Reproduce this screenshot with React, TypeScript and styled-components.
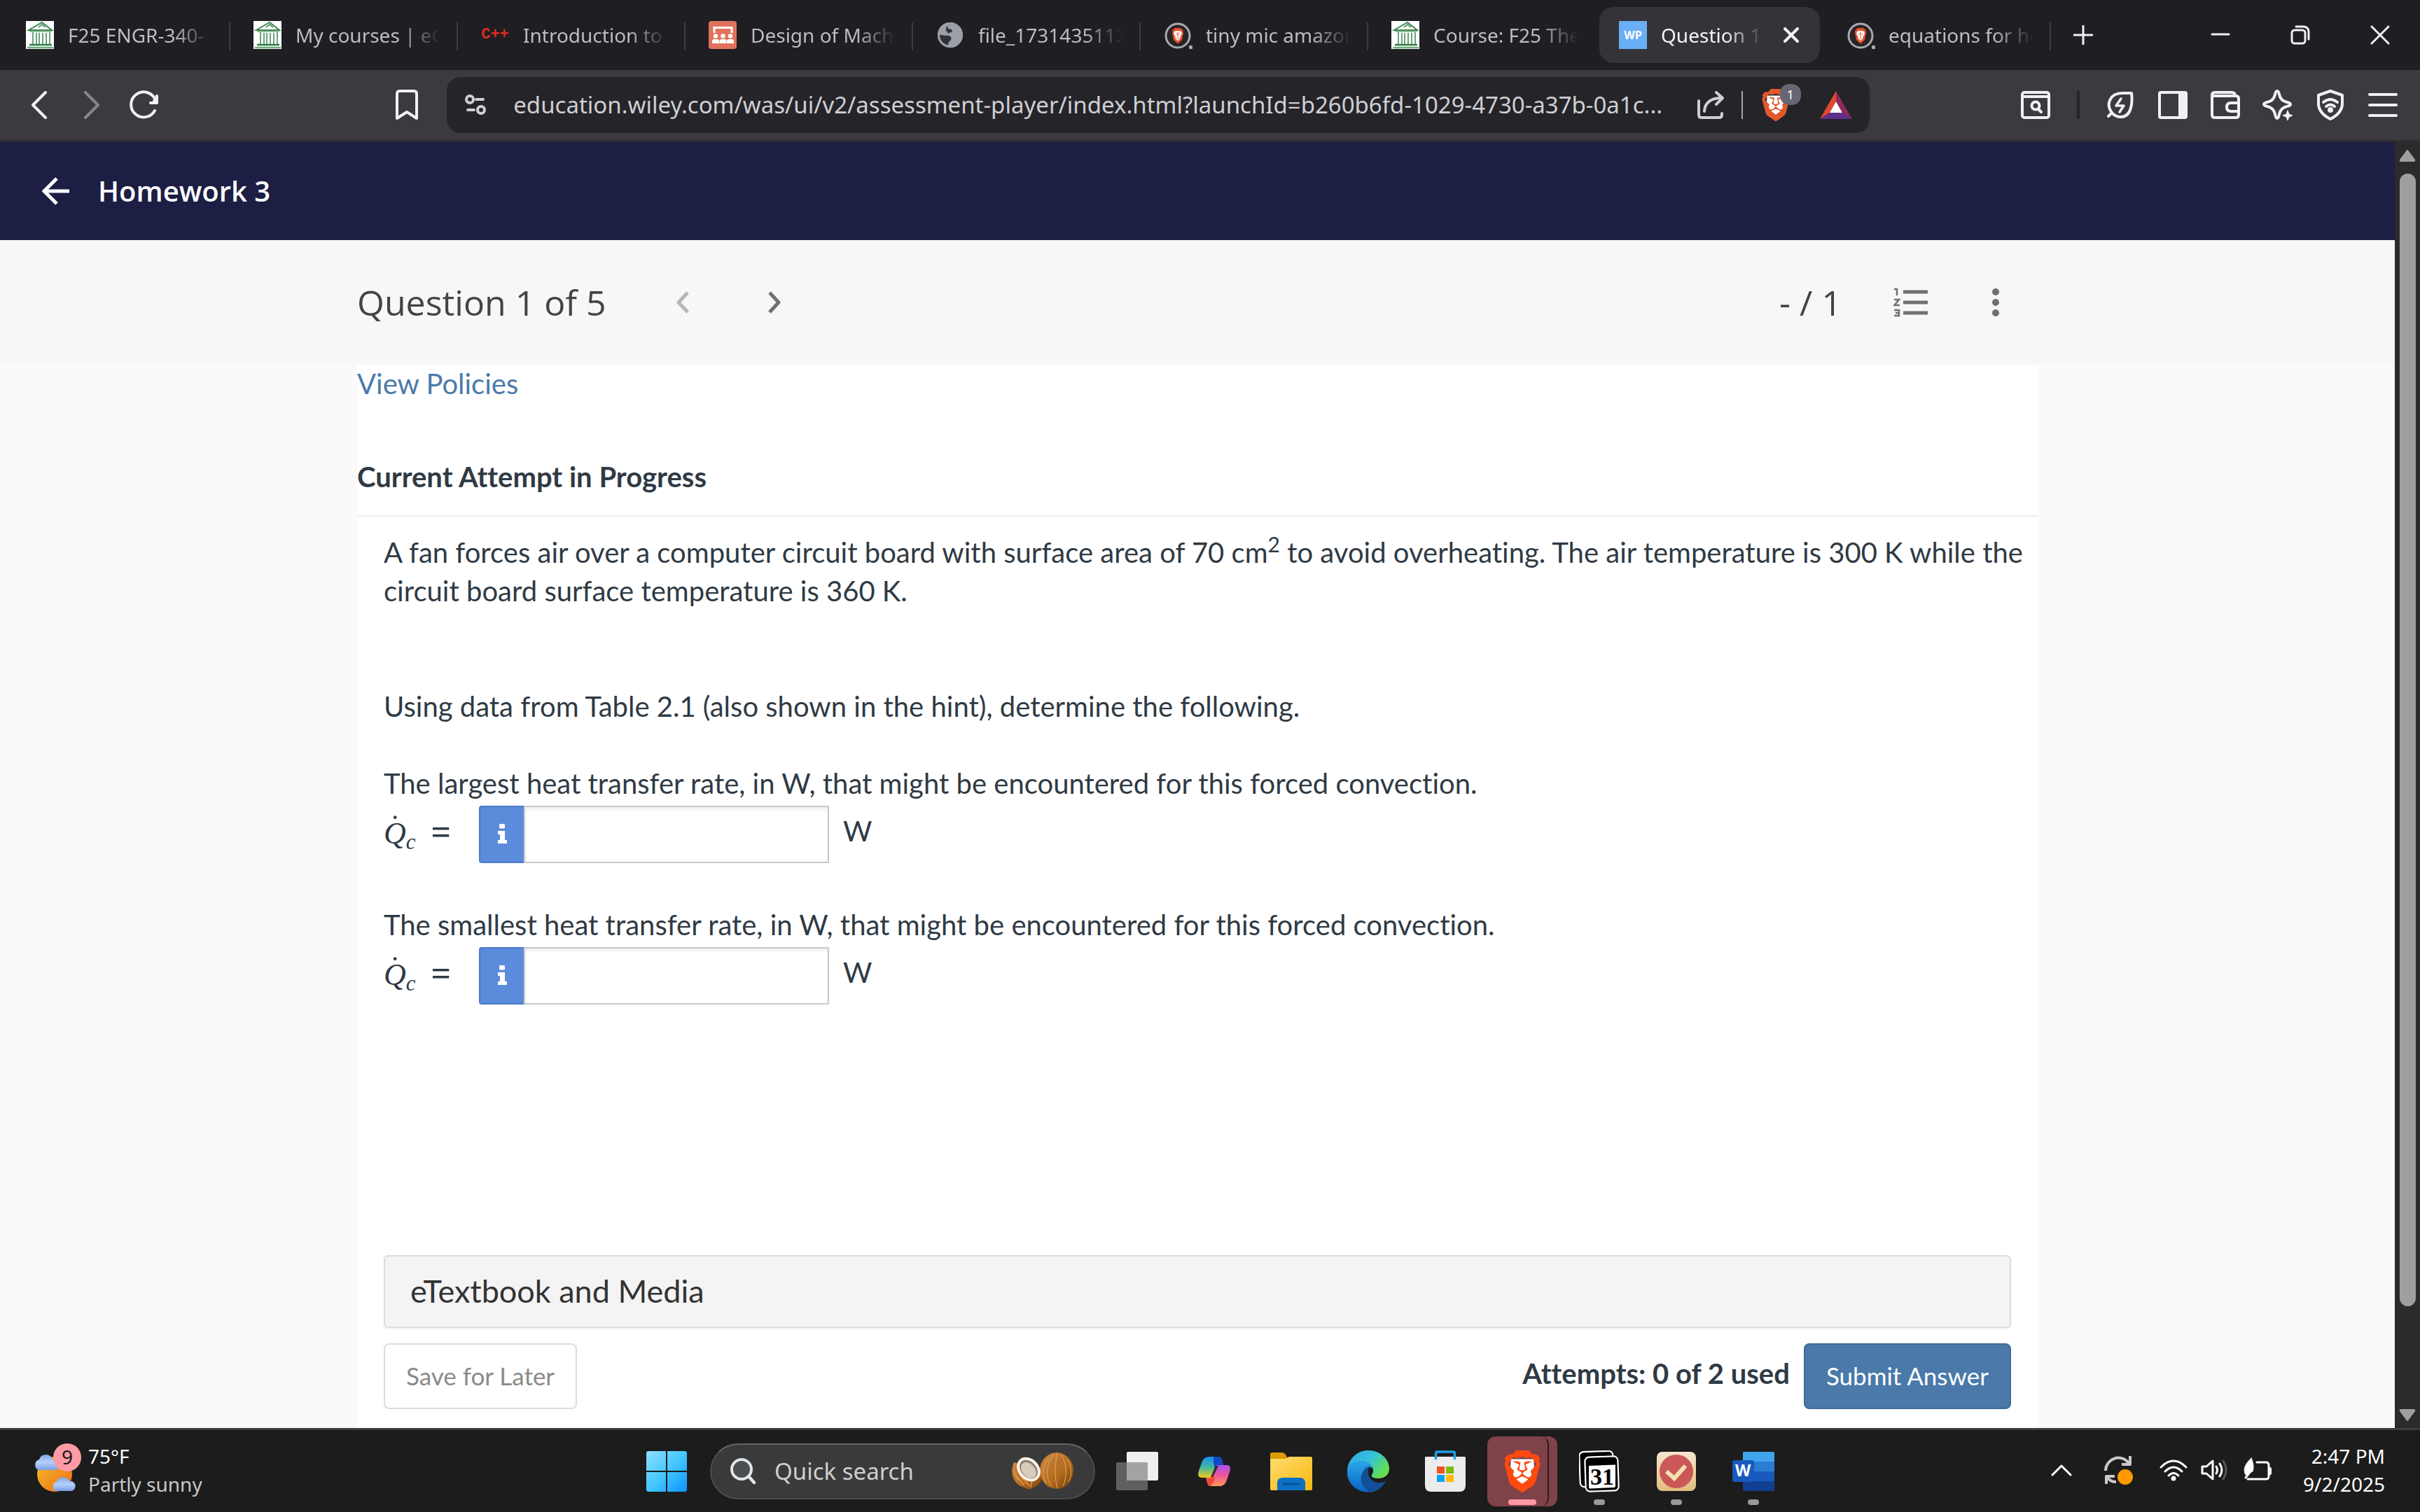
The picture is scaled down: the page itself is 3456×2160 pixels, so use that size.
import React from "react";
import styled, { createGlobalStyle, css } from "styled-components";
import { SiBrave } from "react-icons/si";

const uiFont = '"Noto Sans", "Open Sans", sans-serif';
const bodyFont = 'Lato, "Open Sans", sans-serif';
const titleFont = '"Open Sans", "Noto Sans", sans-serif';

const GlobalStyle = createGlobalStyle`
  * { box-sizing: border-box; }
  body { margin: 0; background: #fafafa; font-family: ${uiFont}; }
  button, input { font: inherit; color: inherit; margin: 0; }
  button { background: none; border: 0; padding: 0; cursor: pointer; }
  h1, h2, p, ul { margin: 0; padding: 0; font-weight: inherit; font-size: inherit; }
  svg { display: block; flex: none; }
`;

const Desktop = styled.div`
  min-height: 100vh;
  display: flex;
  flex-direction: column;
`;

/* ---------- tab strip ---------- */

const TabStrip = styled.header`
  display: flex;
  align-items: center;
  height: 100px;
  padding-left: 4px;
  background: #1f1e23;
  color: #f0f0f2;
`;

const TabCell = styled.div<{ $divider: boolean }>`
  flex: 0 1 325px;
  min-width: 0;
  height: 100px;
  padding: 10px 5px;
  background: ${(p) =>
    p.$divider ? "linear-gradient(#3d3c42, #3d3c42) no-repeat right 32px / 2px 40px" : "none"};
`;

const TabPill = styled.div<{ $active: boolean }>`
  display: flex;
  align-items: center;
  height: 80px;
  padding: 0 20px 0 28px;
  border-radius: 20px;
  background: ${(p) => (p.$active ? "#343338" : "transparent")};
  color: ${(p) => (p.$active ? "#f4f4f6" : "#bdbdbf")};
`;

const TabButton = styled.button`
  display: flex;
  align-items: center;
  gap: 20px;
  flex: 1;
  min-width: 0;
  height: 80px;
`;

const TabTitle = styled.span`
  flex: 1;
  min-width: 0;
  overflow: hidden;
  white-space: nowrap;
  text-align: left;
  font-size: 28px;
  line-height: 40px;
  mask-image: linear-gradient(to right, #000 calc(100% - 56px), transparent);
`;

const TabClose = styled.button`
  width: 42px;
  height: 42px;
  display: grid;
  place-items: center;
  margin-left: 18px;
`;

const FaviconBox = styled.span<{ $bg?: string }>`
  flex: none;
  width: 40px;
  height: 40px;
  display: grid;
  place-items: center;
  background: ${(p) => p.$bg || "transparent"};
`;

const CppMark = styled.span`
  color: #dd2c20;
  font: 700 22px/40px "Liberation Mono", monospace;
`;

const WpMark = styled.span`
  color: #fff;
  font: 700 16px/40px "Open Sans", sans-serif;
`;

const NewTab = styled.button`
  width: 92px;
  height: 80px;
  display: grid;
  place-items: center;
`;

const WindowControls = styled.div`
  display: flex;
  margin-left: auto;
`;

const WindowButton = styled.button`
  width: 114px;
  height: 100px;
  display: grid;
  place-items: center;
`;

/* ---------- toolbar ---------- */

const Toolbar = styled.div`
  display: flex;
  align-items: center;
  height: 103px;
  padding: 0 15px 0 18px;
  background: #3b3a3f;
  border-bottom: 3px solid #2d2c32;
  color: #f1f1f3;
`;

const ToolButton = styled.button<{ $dim?: boolean }>`
  flex: none;
  width: 75px;
  height: 80px;
  display: grid;
  place-items: center;
  color: ${(p) => (p.$dim ? "#86858a" : "#f1f1f3")};
`;

const Stretch = styled.div<{ $grow: number }>`
  flex: ${(p) => p.$grow} 1 0;
`;

const AddressBar = styled.div`
  flex: 198 1 0;
  min-width: 0;
  height: 80px;
  margin-left: 20px;
  padding: 0 25px;
  display: flex;
  align-items: center;
  border-radius: 20px;
  background: #252429;
  color: #cfcfd3;
`;

const AddressInput = styled.input`
  flex: 1;
  min-width: 0;
  margin: 0 24px 0 38px;
  padding: 0;
  border: 0;
  background: none;
  font-size: 33px;
  line-height: 50px;
  outline: none;
  text-overflow: ellipsis;
`;

const AddressButton = styled.button`
  flex: none;
  position: relative;
  display: grid;
  place-items: center;
`;

const ThinRule = styled.span<{ $color: string; $gap: number; $w: number }>`
  flex: none;
  width: ${(p) => p.$w}px;
  height: 40px;
  margin: 0 ${(p) => p.$gap}px;
  background: ${(p) => p.$color};
`;

const ShieldsButton = styled(AddressButton)`
  margin-right: 40px;
`;

const ShieldCount = styled.span`
  position: absolute;
  left: 29px;
  top: -7px;
  width: 30px;
  height: 30px;
  border-radius: 13px;
  background: #666674;
  color: #fff;
  font-size: 18px;
  line-height: 30px;
  text-align: center;
`;

/* ---------- page ---------- */

const Viewport = styled.div`
  flex: 1;
  display: grid;
  grid-template-columns: minmax(0, 1fr) 36px;
`;

const Page = styled.div`
  display: flex;
  flex-direction: column;
  background: #fafafa;
`;

const CourseBar = styled.div`
  display: flex;
  align-items: center;
  gap: 36px;
  height: 140px;
  padding-left: 58px;
  background: #1c1e43;
  color: #fff;
`;

const CourseTitle = styled.h1`
  font: 600 40px/56px ${titleFont};
`;

const BackButton = styled.button`
  width: 46px;
  height: 56px;
  display: grid;
  place-items: center;
`;

const QuestionBar = styled.div`
  background: #f7f7f7;
`;

const QuestionInner = styled.div`
  display: flex;
  align-items: center;
  width: 100%;
  max-width: 2400px;
  height: 178px;
  margin: 0 auto;
  color: #444;
  font: 400 50px/70px ${titleFont};
`;

const QuestionTitle = styled.h2`
  margin-right: 44px;
`;

const QuestionButton = styled.button<{ $w: number; $dim?: boolean }>`
  width: ${(p) => p.$w}px;
  height: 80px;
  display: grid;
  place-items: center;
  color: ${(p) => (p.$dim ? "#b6b6b6" : "#707070")};
`;

const Score = styled.span`
  margin-left: auto;
  margin-right: 38px;
`;

const Sheet = styled.main`
  flex: 1;
  display: flex;
  flex-direction: column;
  width: 100%;
  max-width: 2400px;
  margin: 0 auto;
  background: #fff;
  color: #2f3a44;
  font: 400 40px/55px ${bodyFont};
  font-variant-ligatures: none;
`;

const PolicyLink = styled.a`
  align-self: flex-start;
  padding-top: 1px;
  color: #4a7aaa;
  text-decoration: none;
  line-height: 52px;
`;

const AttemptHeading = styled.h2`
  padding: 80px 0 27px;
  border-bottom: 2px solid #ededed;
  font-weight: 700;
`;

const Problem = styled.section`
  padding: 24px 20px 60px 38px;
`;

const Para = styled.p<{ $gap?: number }>`
  margin-top: ${(p) => p.$gap || 0}px;
`;

const Power = styled.sup`
  position: relative;
  top: -15px;
  vertical-align: baseline;
  font-size: 30px;
  line-height: 0;
`;

const AnswerRow = styled.div`
  display: flex;
  align-items: stretch;
  height: 82px;
  margin-top: 4px;
`;

const AnswerLabel = styled.label`
  display: flex;
  align-items: baseline;
  width: 136px;
  padding-top: 12px;
`;

const MathSymbol = styled.span`
  position: relative;
  font: italic 400 44px/50px "Liberation Serif", serif;
`;

const MathAccent = styled.span`
  position: absolute;
  left: 6px;
  top: -10px;
`;

const MathSub = styled.span`
  position: relative;
  top: 8px;
  margin-right: 22px;
  font: italic 400 31px/31px "Liberation Serif", serif;
`;

const MathEquals = styled.span`
  font: 700 50px/50px "Liberation Serif", serif;
`;

const InfoButton = styled.button`
  width: 64px;
  border: 2px solid #4a7ac8;
  border-right: 0;
  border-radius: 4px 0 0 4px;
  background: #5b8cdb;
  color: #fff;
  display: grid;
  place-items: center;
`;

const AnswerInput = styled.input`
  width: 436px;
  padding: 0 16px;
  border: 2px solid #cacaca;
  border-radius: 0;
  background: #fff;
  box-shadow: inset 0 3px 4px rgba(0, 0, 0, 0.08);
  outline: none;
`;

const Unit = styled.span`
  margin-left: 20px;
  padding-top: 9px;
`;

const SheetFooter = styled.footer`
  margin-top: auto;
  padding: 0 38px 27px;
`;

const MediaButton = styled.button`
  display: block;
  width: 100%;
  height: 104px;
  padding: 0 36px 2px;
  border: 2px solid #dcdcdc;
  border-radius: 6px;
  background: #f4f4f4;
  box-shadow: 0 2px 2px rgba(0, 0, 0, 0.05);
  color: #333;
  font-size: 45px;
  text-align: left;
`;

const Actions = styled.div`
  display: flex;
  align-items: center;
  margin-top: 22px;
`;

const actionButton = css`
  height: 94px;
  padding: 0 30px 2px;
  border-radius: 8px;
  font-size: 35px;
`;

const SaveButton = styled.button`
  ${actionButton}
  border: 2px solid #dcdcdc;
  background: #fff;
  color: #8a8a8a;
`;

const SubmitButton = styled.button`
  ${actionButton}
  border: 2px solid #406a95;
  background: #4a79aa;
  color: #fff;
`;

const Attempts = styled.span`
  margin: 0 20px 8px auto;
  font-weight: 700;
`;

const ScrollTrack = styled.div`
  display: flex;
  flex-direction: column;
  align-items: center;
  gap: 17px;
  padding: 11px 0 10px;
  background: #2b2b2b;
`;

const ScrollThumb = styled.div`
  flex: 1617;
  width: 23px;
  border-radius: 12px;
  background: #9f9f9f;
`;

const ScrollRest = styled.div`
  flex: 113;
`;

/* ---------- taskbar ---------- */

const Taskbar = styled.footer`
  display: grid;
  grid-template-columns: 1fr auto 1fr;
  align-items: center;
  height: 120px;
  border-top: 3px solid #3d3d3d;
  background: #1c1c1c;
  color: #fff;
  font-size: 28px;
  line-height: 40px;
`;

const Weather = styled.button`
  justify-self: start;
  display: flex;
  align-items: center;
  gap: 6px;
  padding: 0 0 4px 46px;
  text-align: left;
`;

const WeatherText = styled.span<{ $muted?: boolean }>`
  display: block;
  color: ${(p) => (p.$muted ? "#c8c8c8" : "#fff")};
`;

const Apps = styled.div`
  display: flex;
  align-items: center;
`;

const AppButton = styled.button`
  position: relative;
  width: 110px;
  height: 100px;
  display: grid;
  place-items: center;
`;

const RunningDot = styled.span<{ $active?: boolean }>`
  position: absolute;
  left: 50%;
  bottom: 2px;
  width: ${(p) => (p.$active ? 40 : 16)}px;
  height: 8px;
  transform: translateX(-50%);
  border-radius: 4px;
  background: ${(p) => (p.$active ? "#ff9aa6" : "#9a9a9a")};
`;

const ActiveTile = styled.span`
  position: relative;
  width: 100px;
  height: 100px;
  display: grid;
  place-items: center;
  border-radius: 12px;
  background: #7f4249;

  &::after {
    content: "";
    position: absolute;
    inset: 0 12px 0 0;
    border-right: 2px solid #2a1c1e;
    border-radius: 12px;
  }
`;

const SearchBox = styled.label`
  display: flex;
  align-items: center;
  width: 550px;
  height: 80px;
  margin: 0 5px 0 7px;
  padding: 0 28px 0 26px;
  gap: 26px;
  border: 2px solid #4c4c4c;
  border-top-color: #646464;
  border-radius: 40px;
  background: #3a3a3a;
`;

const SearchInput = styled.input`
  flex: 1;
  min-width: 0;
  padding: 0;
  border: 0;
  background: none;
  outline: none;
  font-size: 33px;
  line-height: 48px;

  &::placeholder {
    color: #cfcfcf;
    opacity: 1;
  }
`;

const Tray = styled.div`
  justify-self: end;
  display: flex;
  align-items: center;
  padding: 0 50px 4px 0;
`;

const TrayButton = styled.button<{ $gap: number }>`
  margin-right: ${(p) => p.$gap}px;
`;

const Clock = styled.button`
  text-align: right;
`;

/* ---------- icons ---------- */

type StrokeProps = {
  w: number;
  h: number;
  sw?: number;
  children: React.ReactNode;
};

const Stroke = ({ w, h, sw = 4, children }: StrokeProps) => (
  <svg
    width={w}
    height={h}
    viewBox={`0 0 ${w} ${h}`}
    fill="none"
    stroke="currentColor"
    strokeWidth={sw}
    strokeLinecap="round"
    strokeLinejoin="round"
    aria-hidden="true"
  >
    {children}
  </svg>
);

const Temple = () => (
  <svg width="40" height="40" viewBox="0 0 40 40" fill="none" stroke="#5c9a6d" strokeWidth="2" aria-hidden="true">
    <path d="M4 13 L23 2 L37 13 Z" stroke="#3f8552" />
    <path d="M18 9 L23 5 L28 9" />
    <path d="M5 15 H37" stroke="#8fbf9b" />
    <path d="M10 16 V34 M15 17 V34 M19 17 V34 M24 17 V34 M29 17 V34 M34 16 V34" strokeWidth="1.8" />
    <path d="M5 34 H37" stroke="#2f7a45" strokeWidth="2.5" />
    <path d="M2 38 H39" stroke="#6fab7e" strokeWidth="2.5" />
  </svg>
);

const Classroom = () => (
  <svg width="40" height="40" viewBox="0 0 40 40" aria-hidden="true">
    <rect width="40" height="40" rx="4" fill="#e0725d" />
    <path d="M8 17 V9.500 H33 V17" fill="none" stroke="#fff" strokeWidth="3" />
    {[10, 20.5, 31].map((x) => (
      <g key={x} fill="#fff">
        <circle cx={x} cy="21.500" r="3.200" />
        <path d={`M${x - 5} 32 V29 Q${x - 5} 26 ${x - 2} 26 H${x + 2} Q${x + 5} 26 ${x + 5} 29 V32 Z`} />
      </g>
    ))}
  </svg>
);

const Globe = () => (
  <svg width="40" height="40" viewBox="0 0 40 40" aria-hidden="true">
    <circle cx="20" cy="20" r="18" fill="#9ba0a6" />
    <path
      d="M21 5 C17 6 15 9 17 11 C22 11 24 14 22 16 C18 17 15 18 14 21 C19 20 23 23 21 27 C19 29 17 30 17 35 C8 33 4 26 5 20 C8 19 11 21 14 21 L17 16 C14 15 13 12 15 8 Z"
      fill="#1f1e23"
      opacity="0.85"
    />
    <circle cx="20" cy="20" r="16.500" fill="none" stroke="#9ba0a6" strokeWidth="3" />
  </svg>
);

const BraveLion = ({ size, color }: { size: number; color: string }) => (
  <svg width={size} height={size} viewBox="0 0 24 24" aria-hidden="true">
    <path d="M5.500 5 H18.500 L19 14 L12 20.500 L5 14 Z" fill="#fff" />
    <SiBrave size={24} color={color} />
  </svg>
);

const BraveSearch = () => (
  <svg width="42" height="42" viewBox="0 0 42 42" aria-hidden="true">
    <circle cx="20" cy="21" r="17" fill="#2b2426" stroke="#a9abb2" strokeWidth="3" />
    <path d="M12.500 13 L16 10 H24 L27.500 13 L28 17 L26 27 L20 32.500 L14 27 L12 17 Z" fill="#e5502e" />
    <path d="M15 15 L18 14 H22 L25 15 L26 18 L23.500 22.500 V25 L20 28.500 L16.500 25 V22.500 L14 18 Z" fill="#fff" />
    <path d="M20 16 V23 M17 18.500 H18.500 M21.500 18.500 H23 M18 25 H22" stroke="#e5502e" strokeWidth="1.200" />
    <rect x="36" y="35" width="5" height="5" rx="1" fill="#a9abb2" />
  </svg>
);

const BatTriangle = () => (
  <svg width="46" height="41" viewBox="0 0 46 41" aria-hidden="true">
    <path d="M23 0 L0 40 L14 31 L23 15 Z" fill="#e0492d" />
    <path d="M23 0 L46 40 L32 31 L23 15 Z" fill="#8e2a5f" />
    <path d="M0 40 H46 L32 31 H14 Z" fill="#5d2f8b" />
    <path d="M23 15 L14 31 H32 Z" fill="#fff" />
  </svg>
);

const NumberedList = () => (
  <svg width="50" height="42" viewBox="0 0 50 42" fill="none" stroke="#707070" aria-hidden="true">
    <path d="M14 6 H49 M14 21 H49 M14 36 H49" strokeWidth="5" />
    <path
      d="M1 2 H5 V11 M1 17 H8 L1.500 25 H9 M1 32 H8 V40 H1 M3 36 H8"
      strokeWidth="2.500"
    />
  </svg>
);

const InfoGlyph = () => (
  <svg width="16" height="30" viewBox="0 0 16 30" fill="#fff" aria-hidden="true">
    <rect x="4" y="0" width="8" height="6.500" rx="1.500" />
    <path d="M2 10 H12 V23 H15 V28 H2 V23 H5 V15 H2 Z" />
  </svg>
);

const WeatherIcon = () => (
  <svg width="74" height="76" viewBox="0 0 74 76" aria-hidden="true">
    <defs>
      <linearGradient id="sun" x1="0" y1="0" x2="1" y2="1">
        <stop offset="0" stopColor="#f2c12e" />
        <stop offset="1" stopColor="#f06a12" />
      </linearGradient>
      <linearGradient id="cloud" x1="0" y1="0" x2="0" y2="1">
        <stop offset="0" stopColor="#7fa3e8" />
        <stop offset="0.5" stopColor="#b4d1fb" />
        <stop offset="1" stopColor="#7b9fe8" />
      </linearGradient>
    </defs>
    <circle cx="32" cy="44" r="25" fill="url(#sun)" />
    <path d="M9 38 A8 8 0 0 1 10 23 A10 10 0 0 1 29 23 A8 8 0 0 1 34 38 Z" fill="url(#cloud)" />
    <path d="M33 68 A8 8 0 0 1 35 54 A10 10 0 0 1 53 54 A7 7 0 0 1 56 68 Z" fill="url(#cloud)" />
    <circle cx="50" cy="20" r="20" fill="#ff9aa6" />
    <text x="50" y="30" textAnchor="middle" fontFamily="Noto Sans, sans-serif" fontSize="28" fill="#1a1a1a">
      9
    </text>
  </svg>
);

const WindowsLogo = () => (
  <svg width="58" height="58" viewBox="0 0 58 58" aria-hidden="true">
    <defs>
      <linearGradient id="win" x1="0" y1="0" x2="58" y2="58" gradientUnits="userSpaceOnUse">
        <stop offset="0" stopColor="#8fe0ff" />
        <stop offset="0.5" stopColor="#46c8ff" />
        <stop offset="1" stopColor="#0a94ff" />
      </linearGradient>
    </defs>
    <path
      fill="url(#win)"
      d="M3 0 H28 V28 H0 V3 Q0 0 3 0 Z M30 0 H55 Q58 0 58 3 V28 H30 Z M0 30 H28 V58 H3 Q0 58 0 55 Z M30 30 H58 V55 Q58 58 55 58 H30 Z"
    />
  </svg>
);

const SearchGlass = () => (
  <svg width="38" height="38" viewBox="0 0 38 38" fill="none" stroke="#dfe6ea" strokeLinecap="round" aria-hidden="true">
    <circle cx="17" cy="16" r="14" strokeWidth="4" fill="#4a4e50" />
    <path d="M27 26 L35 35" strokeWidth="4.500" />
  </svg>
);

const Coconut = () => (
  <svg width="90" height="54" viewBox="0 0 90 54" aria-hidden="true">
    <defs>
      <linearGradient id="nut" x1="0" y1="0" x2="1" y2="1">
        <stop offset="0" stopColor="#d08a45" />
        <stop offset="0.6" stopColor="#b06a1c" />
        <stop offset="1" stopColor="#6e3a0c" />
      </linearGradient>
    </defs>
    <path d="M4 14 C-2 28 2 44 16 49 L26 53 L32 50 C44 46 46 34 42 26 Z" fill="url(#nut)" />
    <path d="M8 34 L18 46 M14 34 L26 48 M30 38 L28 50 M4 26 L10 40" stroke="#e39a4c" strokeWidth="1.500" />
    <ellipse cx="65" cy="26" rx="24" ry="26" fill="url(#nut)" />
    <path
      d="M62 2 C50 14 48 36 58 48 M66 1 C62 16 62 36 66 51 M72 4 C80 16 80 36 74 48 M80 10 C88 22 86 34 82 42 M54 8 C44 20 44 34 50 44"
      fill="none"
      stroke="#e6a95c"
      strokeWidth="1"
    />
    <g transform="rotate(48 25 24)">
      <ellipse cx="25" cy="24" rx="19" ry="15" fill="#fbf3ea" />
      <ellipse cx="25" cy="24" rx="15" ry="11" fill="#8f8070" />
      <ellipse cx="26" cy="25" rx="13" ry="9" fill="#d8cdbd" />
    </g>
  </svg>
);

const TaskView = () => (
  <svg width="60" height="56" viewBox="0 0 60 56" aria-hidden="true">
    <rect x="0" y="15" width="45" height="40" rx="2" fill="#5f5f5f" />
    <rect x="15" y="0" width="45" height="41" rx="2" fill="#efefef" />
    <rect x="15" y="15" width="30" height="26" fill="#a3a3a3" />
  </svg>
);

const Copilot = () => (
  <svg width="46" height="42" viewBox="0 0 46 42" aria-hidden="true">
    <defs>
      <linearGradient id="cpA" x1="0" y1="0" x2="0" y2="1">
        <stop offset="0" stopColor="#1a8df0" />
        <stop offset="0.500" stopColor="#3fb9a0" />
        <stop offset="1" stopColor="#f6c916" />
      </linearGradient>
      <linearGradient id="cpB" x1="0" y1="0" x2="0" y2="1">
        <stop offset="0" stopColor="#a94ff0" />
        <stop offset="0.500" stopColor="#f0559a" />
        <stop offset="1" stopColor="#ff9a55" />
      </linearGradient>
    </defs>
    <path d="M16 0 H29 Q33 0 34 5 L36 12 H30 Q26 12 25 17 L20 30 H5 Q-2 30 1 20 L6 6 Q9 0 16 0 Z" fill="url(#cpA)" />
    <path d="M22 0 H29 Q33 0 34 5 L36 12 H30 Q26 12 24 17 L22 8 Z" fill="#1446c8" />
    <path d="M30 42 H18 Q14 42 13 37 L11 30 H17 Q20 30 21 26 L26 12 H41 Q48 12 45 22 L40 36 Q37 42 30 42 Z" fill="url(#cpB)" />
    <path d="M18 42 Q14 42 13 37 L11 30 H17 Q20 30 22 25 L24 33 Z" fill="#ef4a3c" />
    <path d="M25 13 L29 13 L21 29 L18 29 Z" fill="#1c1c1c" opacity="0.85" />
  </svg>
);

const Folder = () => (
  <svg width="60" height="54" viewBox="0 0 60 54" aria-hidden="true">
    <defs>
      <linearGradient id="fold" x1="0" y1="0" x2="1" y2="1">
        <stop offset="0" stopColor="#ffdc70" />
        <stop offset="1" stopColor="#f8b70f" />
      </linearGradient>
    </defs>
    <path d="M0 2 Q0 0 3 0 H17 Q20 0 22 3 L26 10 H0 Z" fill="#dd9c05" />
    <path d="M0 9 H22 L27 6 H58 Q60 6 60 8 V52 Q60 54 57 54 H3 Q0 54 0 52 Z" fill="url(#fold)" />
    <path d="M10 54 V44 Q10 36 18 36 H42 Q50 36 50 44 V54 Z" fill="#0c70c4" />
    <path d="M18 45 H42" stroke="#0a4f90" strokeWidth="2.500" />
  </svg>
);

const Edge = () => (
  <svg width="60" height="60" viewBox="0 0 60 60" aria-hidden="true">
    <defs>
      <linearGradient id="edTop" x1="0" y1="0" x2="1" y2="0.600">
        <stop offset="0" stopColor="#2aa5e8" />
        <stop offset="0.550" stopColor="#35c3d8" />
        <stop offset="1" stopColor="#66e04c" />
      </linearGradient>
      <linearGradient id="edLow" x1="0" y1="0" x2="0" y2="1">
        <stop offset="0" stopColor="#2ba6ec" />
        <stop offset="1" stopColor="#0a63c4" />
      </linearGradient>
    </defs>
    <path d="M0 28 C2 10 16 0 30 0 C48 0 60 13 60 26 C60 36 52 40 44 40 C36 40 34 37 35 35 C41 27 34 16 20 15 C10 15 3 20 0 28 Z" fill="url(#edTop)" />
    <path d="M0 28 C3 18 12 14 20 15 C30 15 36 21 37 27 C36 24 30 22 26 26 C16 36 22 50 36 59 C14 63 -2 46 0 28 Z" fill="url(#edLow)" />
    <path d="M26 26 C28 24 30 23 32 23 C26 30 32 48 48 46 C52 45 53 45 55 44 C51 52 44 58 34 60 C20 54 14 38 26 26 Z" fill="#124f96" />
  </svg>
);

const Store = () => (
  <svg width="58" height="60" viewBox="0 0 58 60" aria-hidden="true">
    <path d="M0 10 Q0 9 2 9 H56 Q58 9 58 10 V50 Q58 59 49 59 H9 Q0 59 0 50 Z" fill="#ececec" />
    <path d="M15.500 13 V4 Q15.500 2 18 2 H40 Q42.500 2 42.500 4 V13" fill="none" stroke="#1ba0e4" strokeWidth="3.500" />
    <rect x="17" y="23" width="11" height="10" fill="#f25022" />
    <rect x="30" y="23" width="11" height="10" fill="#7fba00" />
    <rect x="17" y="35" width="11" height="10" fill="#00a4ef" />
    <rect x="30" y="35" width="11" height="10" fill="#ffb900" />
  </svg>
);

const Calendar = () => (
  <svg width="58" height="60" viewBox="0 0 58 60" aria-hidden="true">
    <rect x="1" y="1.500" width="48" height="50" rx="6" fill="#000" stroke="#fff" strokeWidth="2.200" transform="rotate(-2 25 26)" />
    <rect x="9" y="9" width="47" height="49" rx="6" fill="#000" stroke="#fff" strokeWidth="2.200" transform="rotate(-2 32 33)" />
    <path d="M14 22 L52 20.500 V51 Q52 53 50 53 L16 54.500 Q14 54.500 14 52.500 Z" fill="#fff" />
    <text x="33" y="49" textAnchor="middle" fontFamily="Liberation Serif, serif" fontWeight="700" fontSize="34" fill="#000">
      31
    </text>
  </svg>
);

const CheckApp = () => (
  <svg width="56" height="56" viewBox="0 0 56 56" aria-hidden="true">
    <defs>
      <linearGradient id="tan" x1="0" y1="0" x2="0" y2="1">
        <stop offset="0" stopColor="#f6e6cf" />
        <stop offset="1" stopColor="#e2bd7c" />
      </linearGradient>
    </defs>
    <rect width="56" height="56" rx="8" fill="url(#tan)" />
    <circle cx="28" cy="28" r="24" fill="#cb5758" />
    <path d="M14 28 L25 38 L41 20" fill="none" stroke="#f3e3b0" strokeWidth="6" />
  </svg>
);

const Word = () => (
  <svg width="60" height="56" viewBox="0 0 60 56" aria-hidden="true">
    <path d="M15 14 V2 Q15 0 17 0 H58 Q60 0 60 2 V14 Z" fill="#41a5ee" />
    <rect x="15" y="14" width="45" height="14" fill="#2b7cd3" />
    <rect x="15" y="28" width="45" height="14" fill="#185abd" />
    <path d="M15 42 H60 V54 Q60 56 58 56 H17 Q15 56 15 54 Z" fill="#103f91" />
    <rect y="12" width="31" height="31" rx="3" fill="#185abd" />
    <text x="15" y="35" textAnchor="middle" fontFamily="Open Sans, sans-serif" fontWeight="700" fontSize="23" fill="#fff">
      W
    </text>
  </svg>
);

/* ---------- data ---------- */

const templeIcon = (
  <FaviconBox $bg="#fff">
    <Temple />
  </FaviconBox>
);
const braveIcon = (
  <FaviconBox>
    <BraveSearch />
  </FaviconBox>
);

const tabs = [
  { icon: templeIcon, title: "F25 ENGR-340-", divider: true },
  { icon: templeIcon, title: "My courses | eC", divider: true },
  { icon: <FaviconBox><CppMark>C++</CppMark></FaviconBox>, title: "Introduction to", divider: true },
  { icon: <FaviconBox><Classroom /></FaviconBox>, title: "Design of Mach", divider: true },
  { icon: <FaviconBox><Globe /></FaviconBox>, title: "file_1731435112", divider: true },
  { icon: braveIcon, title: "tiny mic amazon", divider: true },
  { icon: templeIcon, title: "Course: F25 The", divider: false },
  { icon: <FaviconBox $bg="#6aaef5"><WpMark>WP</WpMark></FaviconBox>, title: "Question 1", divider: false, active: true },
  { icon: braveIcon, title: "equations for he", divider: true },
];

const Answer = ({ id }: { id: string }) => (
  <AnswerRow>
    <AnswerLabel htmlFor={id}>
      <MathSymbol>
        Q<MathAccent>˙</MathAccent>
      </MathSymbol>
      <MathSub>c</MathSub>
      <MathEquals>=</MathEquals>
    </AnswerLabel>
    <InfoButton aria-label="Answer format">
      <InfoGlyph />
    </InfoButton>
    <AnswerInput id={id} type="text" />
    <Unit>W</Unit>
  </AnswerRow>
);

export default function App() {
  return (
    <Desktop>
      <GlobalStyle />
      <TabStrip>
        {tabs.map((t, i) => (
          <TabCell key={i} $divider={t.divider}>
            <TabPill $active={!!t.active}>
              <TabButton>
                {t.icon}
                <TabTitle>{t.title}</TabTitle>
              </TabButton>
              {t.active && (
                <TabClose aria-label="Close tab">
                  <Stroke w={22} h={22}><path d="M2 2 L20 20 M20 2 L2 20" /></Stroke>
                </TabClose>
              )}
            </TabPill>
          </TabCell>
        ))}
        <NewTab aria-label="New tab">
          <Stroke w={28} h={28} sw={3}><path d="M14 1 V27 M1 14 H27" /></Stroke>
        </NewTab>
        <WindowControls>
          <WindowButton aria-label="Minimize">
            <Stroke w={28} h={28} sw={3}><path d="M2 13 H26" /></Stroke>
          </WindowButton>
          <WindowButton aria-label="Restore">
            <Stroke w={28} h={28} sw={3}>
              <rect x="2" y="7" width="19" height="19" rx="4" />
              <path d="M8 2 H18 Q26 2 26 10 V20" />
            </Stroke>
          </WindowButton>
          <WindowButton aria-label="Close">
            <Stroke w={28} h={28} sw={3}><path d="M2 2 L26 26 M26 2 L2 26" /></Stroke>
          </WindowButton>
        </WindowControls>
      </TabStrip>

      <Toolbar>
        <ToolButton aria-label="Back">
          <Stroke w={24} h={40}><path d="M21 2 L3 20 L21 38" /></Stroke>
        </ToolButton>
        <ToolButton aria-label="Forward" $dim>
          <Stroke w={24} h={40}><path d="M3 2 L21 20 L3 38" /></Stroke>
        </ToolButton>
        <ToolButton aria-label="Reload">
          <Stroke w={44} h={42}>
            <path d="M37 29 A18 18 0 1 1 38 14" />
            <circle cx="38" cy="16" r="4" fill="currentColor" stroke="none" />
            <path d="M40 8 V18 H31" />
          </Stroke>
        </ToolButton>
        <Stretch $grow={30} />
        <ToolButton aria-label="Bookmark">
          <Stroke w={34} h={44}><path d="M3 41 V6 Q3 2 7 2 H27 Q31 2 31 6 V41 L17 32 Z" /></Stroke>
        </ToolButton>
        <AddressBar>
          <AddressButton aria-label="Site information">
            <Stroke w={32} h={30} sw={4}>
              <circle cx="8" cy="7" r="5" />
              <path d="M17 7 H27 M5 22 H14" />
              <circle cx="24" cy="22" r="5" />
            </Stroke>
          </AddressButton>
          <AddressInput
            aria-label="Address"
            defaultValue="education.wiley.com/was/ui/v2/assessment-player/index.html?launchId=b260b6fd-1029-4730-a37b-0a1c..."
          />
          <AddressButton aria-label="Share">
            <Stroke w={40} h={40}>
              <path d="M3 14 V34 Q3 38 7 38 H32 Q36 38 36 34 V32 M11 29 Q12 12 32 10 H36 M28 2 L37 10 L28 19" />
            </Stroke>
          </AddressButton>
          <ThinRule $color="#a5a4a9" $gap={24} $w={2} />
          <ShieldsButton aria-label="Shields">
            <BraveLion size={46} color="#e2592a" />
            <ShieldCount>1</ShieldCount>
          </ShieldsButton>
          <AddressButton aria-label="Rewards">
            <BatTriangle />
          </AddressButton>
        </AddressBar>
        <Stretch $grow={20} />
        <ToolButton aria-label="Search page">
          <Stroke w={44} h={42}>
            <rect x="3" y="3" width="38" height="36" rx="3" />
            <path d="M3 9 H41" />
            <circle cx="22" cy="22" r="5.500" />
            <path d="M26 27 L30 31" />
          </Stroke>
        </ToolButton>
        <ThinRule $color="#252429" $gap={21} $w={4} />
        <ToolButton aria-label="Energy saver">
          <Stroke w={42} h={42}>
            <path d="M4 37 L9 32 C0 20 6 4 24 4 H37 C39 20 36 38 22 38 C16 38 12 36 9 32" />
            <path d="M22 12 L15 22 H26 L20 31" strokeWidth="3.500" />
          </Stroke>
        </ToolButton>
        <ToolButton aria-label="Sidebar">
          <Stroke w={44} h={42}>
            <rect x="3" y="3" width="38" height="36" rx="2" />
            <path d="M32 4 H40 V38 H32 Z" fill="currentColor" />
          </Stroke>
        </ToolButton>
        <ToolButton aria-label="Wallet">
          <Stroke w={44} h={42}>
            <path d="M3 7 Q3 3 7 3 H31 Q36 3 36 8 M3 8 H37 Q41 8 41 12 V35 Q41 39 37 39 H7 Q3 39 3 35 Z" />
            <path d="M41 18 H30 Q24 18 24 24 Q24 30 30 30 H41" />
          </Stroke>
        </ToolButton>
        <ToolButton aria-label="Leo">
          <Stroke w={46} h={46}>
            <path d="M22 3 Q24 3 25 8 Q27 17 36 19 Q41 20 41 22 Q41 24 36 25 Q27 27 25 36 Q24 42 22 42 Q20 42 19 36 Q17 27 8 25 Q3 24 3 22 Q3 20 8 19 Q17 17 19 8 Q20 3 22 3 Z" />
            <path d="M37 31 L39 36 L44 38 L39 40 L37 45 L35 40 L30 38 L35 36 Z" fill="currentColor" strokeWidth="1" />
          </Stroke>
        </ToolButton>
        <ToolButton aria-label="VPN">
          <Stroke w={42} h={46}>
            <path d="M21 3 L38 9 V22 Q37 35 21 43 Q5 35 4 22 V9 Z" />
            <path d="M11 19 Q21 11 31 19 M15 25 Q21 20 27 25" />
            <circle cx="21" cy="30" r="2" fill="currentColor" />
          </Stroke>
        </ToolButton>
        <ToolButton aria-label="Menu">
          <Stroke w={44} h={40}><path d="M3 5 H41 M3 20 H41 M3 35 H41" /></Stroke>
        </ToolButton>
      </Toolbar>

      <Viewport>
        <Page>
          <CourseBar>
            <BackButton aria-label="Back to course">
              <Stroke w={42} h={42} sw={5}>
                <path d="M21 3 L3 21 L21 39 M4 21 H39" strokeLinejoin="miter" strokeLinecap="butt" />
              </Stroke>
            </BackButton>
            <CourseTitle>Homework 3</CourseTitle>
          </CourseBar>
          <QuestionBar>
            <QuestionInner>
              <QuestionTitle>Question 1 of 5</QuestionTitle>
              <QuestionButton $w={131} $dim aria-label="Previous question">
                <Stroke w={20} h={32}><path d="M17 2 L4 16 L17 30" strokeLinecap="butt" strokeWidth="5" /></Stroke>
              </QuestionButton>
              <QuestionButton $w={131} aria-label="Next question">
                <Stroke w={20} h={32}><path d="M3 2 L16 16 L3 30" strokeLinecap="butt" strokeWidth="5" /></Stroke>
              </QuestionButton>
              <Score>- / 1</Score>
              <QuestionButton $w={121} aria-label="Question list">
                <NumberedList />
              </QuestionButton>
              <QuestionButton $w={121} aria-label="More options">
                <svg width="12" height="42" viewBox="0 0 12 42" fill="#707070" aria-hidden="true">
                  <circle cx="6" cy="6" r="5" />
                  <circle cx="6" cy="21" r="5" />
                  <circle cx="6" cy="36" r="5" />
                </svg>
              </QuestionButton>
            </QuestionInner>
          </QuestionBar>
          <Sheet>
            <PolicyLink href="#policies">View Policies</PolicyLink>
            <AttemptHeading>Current Attempt in Progress</AttemptHeading>
            <Problem>
              <Para>
                A fan forces air over a computer circuit board with surface area of 70 cm<Power>2</Power> to avoid
                overheating. The air temperature is 300 K while the circuit board surface temperature is 360 K.
              </Para>
              <Para $gap={110}>Using data from Table 2.1 (also shown in the hint), determine the following.</Para>
              <Para $gap={55}>
                The largest heat transfer rate, in W, that might be encountered for this forced convection.
              </Para>
              <Answer id="largest" />
              <Para $gap={61}>
                The smallest heat transfer rate, in W, that might be encountered for this forced convection.
              </Para>
              <Answer id="smallest" />
            </Problem>
            <SheetFooter>
              <MediaButton>eTextbook and Media</MediaButton>
              <Actions>
                <SaveButton>Save for Later</SaveButton>
                <Attempts>Attempts: 0 of 2 used</Attempts>
                <SubmitButton>Submit Answer</SubmitButton>
              </Actions>
            </SheetFooter>
          </Sheet>
        </Page>
        <ScrollTrack aria-hidden="true">
          <svg width="24" height="17" viewBox="0 0 24 17" fill="#9f9f9f">
            <path d="M12 0 Q13 0 14 2 L23 14 Q24 17 21 17 H3 Q0 17 1 14 L10 2 Q11 0 12 0 Z" />
          </svg>
          <ScrollThumb />
          <ScrollRest />
          <svg width="24" height="17" viewBox="0 0 24 17" fill="#9f9f9f">
            <path d="M12 17 Q13 17 14 15 L23 3 Q24 0 21 0 H3 Q0 0 1 3 L10 15 Q11 17 12 17 Z" />
          </svg>
        </ScrollTrack>
      </Viewport>

      <Taskbar>
        <Weather>
          <WeatherIcon />
          <span>
            <WeatherText>75°F</WeatherText>
            <WeatherText $muted>Partly sunny</WeatherText>
          </span>
        </Weather>
        <Apps>
          <AppButton aria-label="Start"><WindowsLogo /></AppButton>
          <SearchBox>
            <SearchGlass />
            <SearchInput type="text" placeholder="Quick search" aria-label="Quick search" />
            <Coconut />
          </SearchBox>
          <AppButton aria-label="Task view"><TaskView /></AppButton>
          <AppButton aria-label="Copilot"><Copilot /></AppButton>
          <AppButton aria-label="File Explorer"><Folder /></AppButton>
          <AppButton aria-label="Edge"><Edge /></AppButton>
          <AppButton aria-label="Store"><Store /></AppButton>
          <AppButton aria-label="Brave">
            <ActiveTile><BraveLion size={60} color="#ff4a10" /></ActiveTile>
            <RunningDot $active />
          </AppButton>
          <AppButton aria-label="Calendar"><Calendar /><RunningDot /></AppButton>
          <AppButton aria-label="Tasks"><CheckApp /><RunningDot /></AppButton>
          <AppButton aria-label="Word"><Word /><RunningDot /></AppButton>
        </Apps>
        <Tray>
          <TrayButton $gap={45} aria-label="Hidden icons">
            <Stroke w={30} h={18} sw={3}><path d="M2 16 L15 3 L28 16" /></Stroke>
          </TrayButton>
          <TrayButton $gap={37} aria-label="Sync">
            <Stroke w={42} h={42} sw={4}>
              <g stroke="#c9c9c9" strokeLinecap="butt">
                <path d="M3 22 C3 6 24 -4 36 11 M38 1 V13 H26" />
                <path d="M18 38 C12 38 7 35 5 30 M4 41 V30 H16" />
              </g>
              <circle cx="31" cy="31" r="11" fill="#ff9a00" stroke="none" />
            </Stroke>
          </TrayButton>
          <TrayButton $gap={17} aria-label="Network">
            <Stroke w={42} h={32} sw={3}>
              <path d="M3 12 Q21 -6 39 12 M9 18 Q21 6 33 18 M14 24 Q21 17 28 24" />
              <circle cx="21" cy="28" r="2" fill="currentColor" />
            </Stroke>
          </TrayButton>
          <TrayButton $gap={20} aria-label="Volume">
            <Stroke w={40} h={32} sw={3}>
              <path d="M3 11 H9 L18 3 V29 L9 21 H3 Z" />
              <path d="M23 11 Q26 16 23 21 M28 7 Q34 16 28 25" />
              <path d="M33 3 Q41 16 33 29" stroke="#555" />
            </Stroke>
          </TrayButton>
          <TrayButton $gap={43} aria-label="Battery">
            <Stroke w={44} h={36} sw={3}>
              <path d="M21 7 H34 Q38 7 38 11 V27 Q38 31 34 31 H8" />
              <path d="M40 16 V23" strokeWidth="4" />
              <path d="M13 1 C16 8 17 14 15 20 L5 25 C0 16 6 8 13 1 Z" fill="currentColor" strokeWidth="1" />
              <path d="M5 29 L12 20" />
            </Stroke>
          </TrayButton>
          <Clock>
            <WeatherText>2:47 PM</WeatherText>
            <WeatherText>9/2/2025</WeatherText>
          </Clock>
        </Tray>
      </Taskbar>
    </Desktop>
  );
}
